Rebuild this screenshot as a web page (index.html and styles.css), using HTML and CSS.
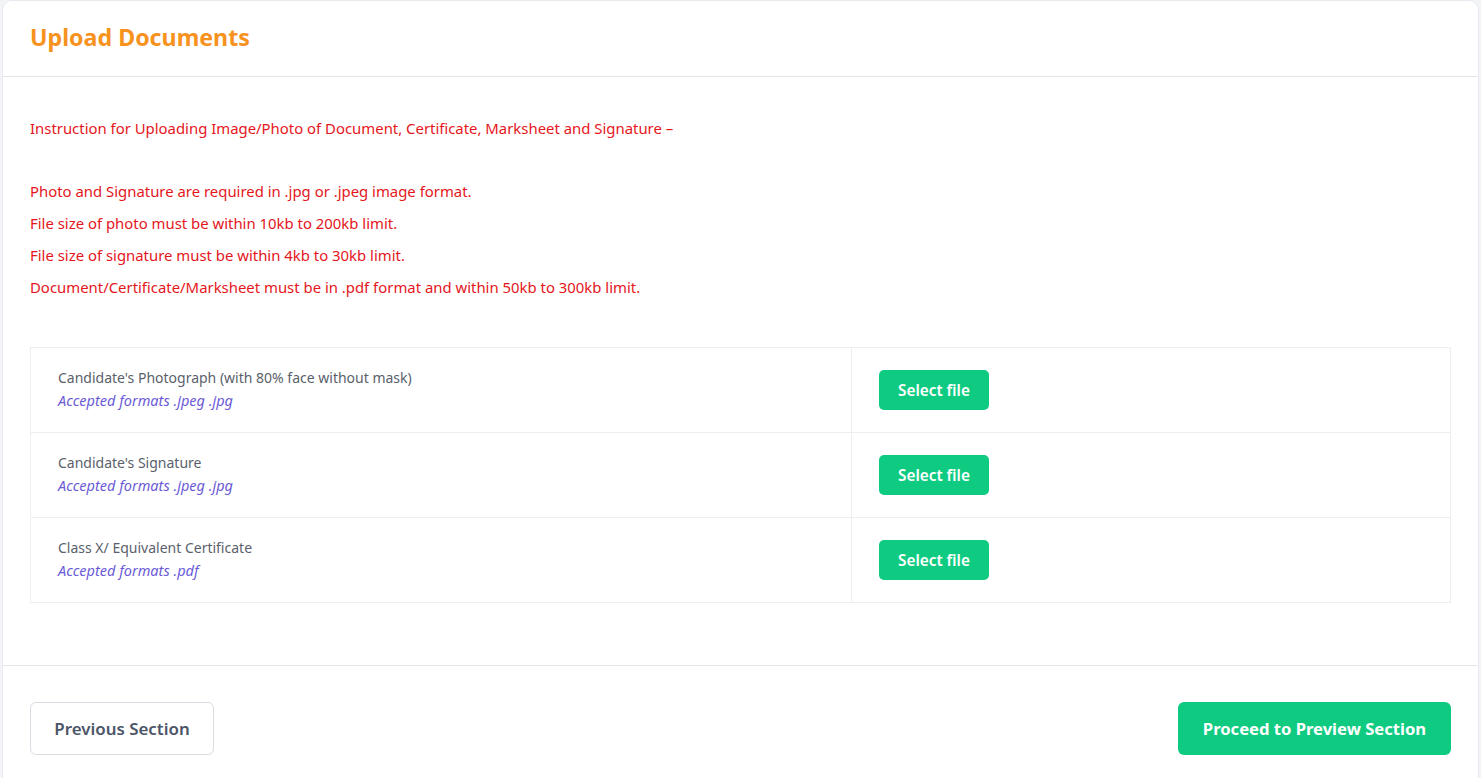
FILE: index.html
```html
<!DOCTYPE html>
<html>
<head>
    <title>Upload Documents</title>
    <link rel="stylesheet" href="styles.css">
</head>
<body>
    <div class="card">
        <div class="card-header">
            <h2>Upload Documents</h2>
        </div>

        <div class="card-body">
            <div class="instructions">
                <p class="intro">Instruction for Uploading Image/Photo of Document, Certificate, Marksheet and Signature &ndash;</p>
                <p>Photo and Signature are required in .jpg or .jpeg image format.</p>
                <p>File size of photo must be within 10kb to 200kb limit.</p>
                <p>File size of signature must be within 4kb to 30kb limit.</p>
                <p>Document/Certificate/Marksheet must be in .pdf format and within 50kb to 300kb limit.</p>
            </div>

            <table class="upload-table">
                <tr>
                    <td class="label-cell">
                        <div class="doc-name">Candidate's Photograph (with 80% face without mask)</div>
                        <div class="doc-formats">Accepted formats .jpeg .jpg</div>
                    </td>
                    <td class="action-cell"><button class="btn-select">Select file</button></td>
                </tr>
                <tr>
                    <td class="label-cell">
                        <div class="doc-name">Candidate's Signature</div>
                        <div class="doc-formats">Accepted formats .jpeg .jpg</div>
                    </td>
                    <td class="action-cell"><button class="btn-select">Select file</button></td>
                </tr>
                <tr>
                    <td class="label-cell">
                        <div class="doc-name">Class X/ Equivalent Certificate</div>
                        <div class="doc-formats">Accepted formats .pdf</div>
                    </td>
                    <td class="action-cell"><button class="btn-select">Select file</button></td>
                </tr>
            </table>
        </div>

        <div class="card-footer">
            <button class="btn-outline">Previous Section</button>
            <button class="btn-primary">Proceed to Preview Section</button>
        </div>
    </div>
</body>
</html>
```

FILE: styles.css
```css
body {
    margin: 0;
    background: #f3f4f8;
    font-family: 'Noto Sans', 'Open Sans', sans-serif;
    overflow: hidden;
}

.card {
    margin-left: 2px;
    width: 1475px;
    background: #ffffff;
    border: 1px solid #e8eaf0;
    border-radius: 10px 10px 0 0;
}

.card-header {
    height: 75px;
    padding: 0 27px;
    display: flex;
    align-items: center;
    border-bottom: 1px solid #e4e6ec;
}

.card-header h2 {
    margin: 0;
    margin-top: -4px;
    font-size: 23.2px;
    font-weight: 700;
    color: #f7921e;
}

.card-body {
    padding: 35px 27px 62px 27px;
}

.instructions {
    margin-bottom: 44px;
}

.instructions p {
    margin: 0;
    font-size: 14.9px;
    line-height: 32px;
    color: #e4161d;
}

.instructions .intro {
    margin-bottom: 31px;
}

.upload-table {
    width: 100%;
    border-collapse: collapse;
    border: 1px solid #eceef2;
}

.upload-table td {
    border: 1px solid #eceef2;
    height: 84px;
    padding: 0 27px;
    vertical-align: middle;
}

.label-cell {
    width: 766px;
}

.doc-name {
    font-size: 14px;
    color: #5a5f6b;
    line-height: 23px;
    margin-top: -2px;
}

.doc-formats {
    font-size: 14.5px;
    font-style: italic;
    color: #6b5bd6;
    line-height: 23px;
}

.btn-select {
    width: 110px;
    height: 40px;
    border: none;
    border-radius: 5px;
    background: #0fcb82;
    color: #ffffff;
    font-family: 'Noto Sans', sans-serif;
    font-size: 15.3px;
    font-weight: 600;
    cursor: pointer;
}

.card-footer {
    border-top: 1px solid #e4e6ec;
    padding: 36px 27px 30px 27px;
    display: flex;
    justify-content: space-between;
}

.btn-outline {
    width: 184px;
    height: 53px;
    background: #ffffff;
    border: 1px solid #d9dce3;
    border-radius: 6px;
    color: #4c5568;
    font-family: 'Noto Sans', sans-serif;
    font-size: 16.9px;
    font-weight: 600;
    cursor: pointer;
}

.btn-primary {
    width: 273px;
    height: 53px;
    background: #0fcb82;
    border: none;
    border-radius: 6px;
    color: #ffffff;
    font-family: 'Noto Sans', sans-serif;
    font-size: 16.6px;
    font-weight: 700;
    cursor: pointer;
}
```
